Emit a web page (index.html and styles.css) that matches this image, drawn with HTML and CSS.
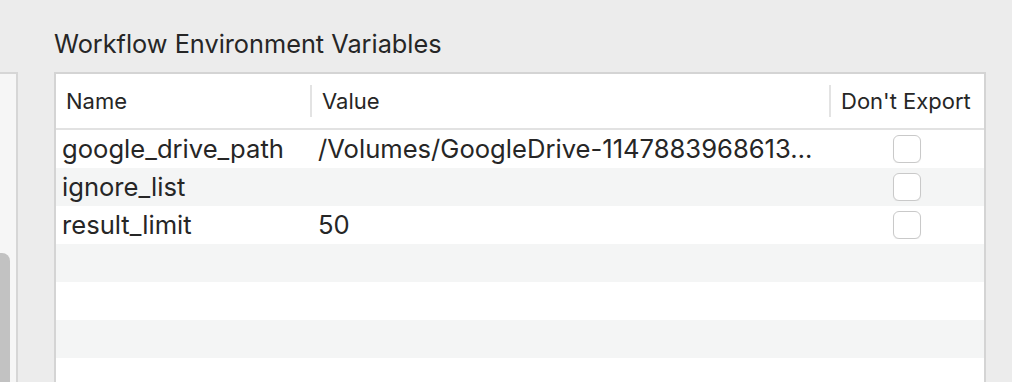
FILE: index.html
```html
<!DOCTYPE html>
<html>
<head>
<meta charset="utf-8">
<link rel="stylesheet" href="styles.css">
</head>
<body>
<div class="page">
  <div class="side">
    <div class="side-panel">
      <div class="thumb"></div>
    </div>
  </div>
  <div class="main">
    <h1 class="title">Workflow Environment Variables</h1>
    <div class="table">
      <div class="head">
        <div class="hcell c-name">Name</div>
        <div class="hcell c-value">Value</div>
        <div class="hcell c-export">Don't Export</div>
        <div class="hcell c-end"></div>
      </div>
      <div class="row">
        <div class="cell c-name">google_drive_path</div>
        <div class="cell c-value">/Volumes/GoogleDrive-1147883968613…</div>
        <div class="cell c-export"><span class="check"></span></div>
      </div>
      <div class="row alt">
        <div class="cell c-name">ignore_list</div>
        <div class="cell c-value"></div>
        <div class="cell c-export"><span class="check"></span></div>
      </div>
      <div class="row">
        <div class="cell c-name">result_limit</div>
        <div class="cell c-value">50</div>
        <div class="cell c-export"><span class="check"></span></div>
      </div>
      <div class="row alt"></div>
      <div class="row"></div>
      <div class="row alt"></div>
      <div class="row"></div>
    </div>
  </div>
</div>
</body>
</html>
```

FILE: styles.css
```css
html, body {
  margin: 0;
  padding: 0;
  background: #ececec;
  width: 1012px;
  height: 382px;
  overflow: hidden;
  font-family: "Inter", "Liberation Sans", sans-serif;
  color: #262626;
}

.page {
  display: flex;
  height: 382px;
  overflow: hidden;
}

.side {
  width: 18px;
  padding-top: 72px;
  flex: none;
  display: flex;
  flex-direction: column;
}

.side-panel {
  flex: 1;
  background: #f6f6f6;
  border-top: 2px solid #d6d6d6;
  border-right: 2px solid #d6d6d6;
  box-sizing: border-box;
  padding-top: 179px;
  display: flex;
  flex-direction: column;
}

.thumb {
  width: 10px;
  flex: 1;
  background: #c2c2c2;
  border-top-right-radius: 8px;
}

.main {
  margin-left: 36px;
  width: 932px;
  flex: none;
  display: flex;
  flex-direction: column;
}

.title {
  margin: 0;
  height: 72px;
  flex: none;
  box-sizing: border-box;
  padding-top: 28px;
  font-size: 25.3px;
  font-weight: 400;
  line-height: 32px;
  padding-left: 0;
  color: #262626;
}

.table {
  flex: 1;
  background: #fff;
  border: 2px solid #d4d4d4;
  border-bottom: none;
  box-sizing: border-box;
  overflow: hidden;
}

.head {
  display: flex;
  height: 54px;
  align-items: center;
  border-bottom: 2px solid #e2e2e2;
}

.hcell {
  font-size: 22px;
  line-height: 32px;
  box-sizing: border-box;
  padding-left: 10px;
  border-left: 2px solid #e3e3e3;
  white-space: nowrap;
}

.hcell.c-name {
  border-left: none;
  width: 254px;
}

.hcell.c-value {
  width: 519px;
}

.hcell.c-export {
  width: 153px;
}

.hcell.c-end {
  width: 2px;
  padding: 0;
}

.row {
  display: flex;
  height: 38px;
  align-items: center;
}

.row.alt {
  background: #f4f5f5;
}

.cell {
  font-size: 25.6px;
  line-height: 38px;
  box-sizing: border-box;
  padding-left: 6px;
  white-space: nowrap;
  overflow: hidden;
}

.cell.c-name {
  width: 256px;
}

.cell.c-value {
  width: 519px;
}

.cell.c-export {
  width: 151px;
  display: flex;
  justify-content: center;
  align-items: center;
  padding-left: 0;
}

.check {
  display: block;
  width: 28px;
  height: 28px;
  box-sizing: border-box;
  border: 1px solid #c9c9c9;
  border-radius: 6px;
  background: #fff;
  box-shadow: 0 1px 1px rgba(0, 0, 0, 0.06);
}
```
